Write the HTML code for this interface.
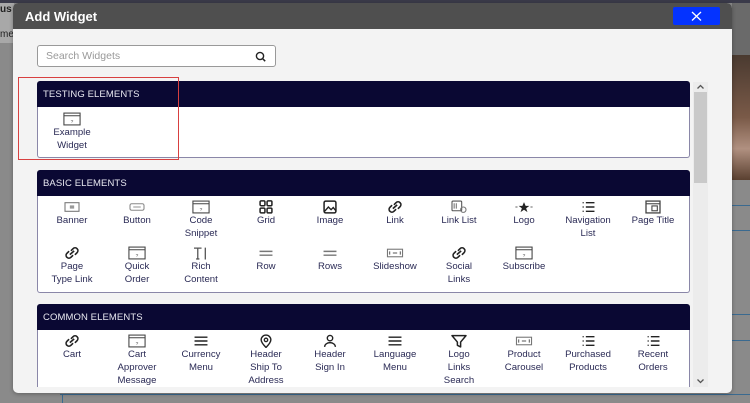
<!DOCTYPE html>
<html><head><meta charset="utf-8"><style>
*{margin:0;padding:0;box-sizing:border-box}
body{width:750px;height:403px;overflow:hidden;position:relative;background:#8a8a8a;font-family:"Liberation Sans",sans-serif}
.a{position:absolute}
.it{position:absolute;width:68px;margin-left:-34px;text-align:center;color:#2a2a55;font-size:9.6px;line-height:13px}
.it svg{display:block;margin:0 auto 0;width:20px;height:14px}
.ph{position:absolute;left:37px;width:653px;height:26px;background:#0a0833;color:#e8e8f0;font-size:9.5px;line-height:27px;padding-left:6px;border-radius:3px 3px 0 0;letter-spacing:.1px}
.pb{position:absolute;left:37px;width:653px;background:#fff;border:1px solid #8a87a8;border-top:none;border-radius:0 0 3px 3px}
</style></head><body>
<div class="a" style="left:0;top:0;width:750px;height:3px;background:#3a3a4a"></div>
<div class="a" style="left:0;top:3px;width:14px;height:40px;background:#a8a8a8"></div>
<div class="a" style="left:0;top:4px;font-size:10px;font-weight:bold;color:#222">us</div>
<div class="a" style="left:0;top:29px;font-size:10px;color:#222">me</div>
<div class="a" style="left:732px;top:3px;width:18px;height:52px;background:#6a6a6a"></div>
<div class="a" style="left:732px;top:55px;width:18px;height:125px;background:linear-gradient(180deg,#4a3a30,#7a5a48 50%,#b09080 75%,#5a4030)"></div>
<div class="a" style="left:732px;top:205px;width:18px;height:1px;background:#3a6a90"></div>
<div class="a" style="left:732px;top:230px;width:18px;height:1px;background:#3a6a90"></div>
<div class="a" style="left:732px;top:314px;width:18px;height:1px;background:#3a6a90"></div>
<div class="a" style="left:732px;top:340px;width:18px;height:1px;background:#3a6a90"></div>
<div class="a" style="left:60px;top:394px;width:690px;height:1px;background:#3a6a90"></div>
<div class="a" style="left:62px;top:394px;width:1px;height:9px;background:#3a6a90"></div>
<div class="a" style="left:13px;top:3px;width:719px;height:390px;background:#f3f3f3;border-radius:5px;overflow:hidden;box-shadow:0 1px 4px rgba(0,0,0,.3)">
 <div style="height:26px;background:#4f4f4f;color:#fff;font-weight:bold;font-size:13px;line-height:27px;padding-left:12px">Add Widget</div>
</div>
<div class="a" style="left:673px;top:7px;width:47px;height:18px;background:#0433ff;border-radius:2px"><svg width="47" height="18"><path d="M19 5l9 8.5M28 5l-9 8.5" stroke="#fff" stroke-width="1.3"/></svg></div>
<div class="a" style="left:37px;top:45px;width:239px;height:22px;background:#fff;border:1px solid #999;border-radius:3px;font-size:10.5px;color:#999;line-height:20px;padding-left:8px">Search Widgets
 <svg class="a" style="left:217px;top:5px" width="12" height="12"><circle cx="5" cy="5" r="3.6" fill="none" stroke="#222" stroke-width="1.4"/><path d="M7.6 7.6l2.6 2.6" stroke="#222" stroke-width="1.5"/></svg></div>
<div class="a" style="left:693px;top:82px;width:15px;height:305px;background:#ececec"></div>
<div class="a" style="left:694px;top:92px;width:13px;height:91px;background:#c9c9c9"></div>
<svg class="a" style="left:695px;top:83px" width="11" height="8"><path d="M2.5 5.5l3-3 3 3" fill="none" stroke="#555" stroke-width="1.3"/></svg>
<svg class="a" style="left:695px;top:377px" width="11" height="8"><path d="M2.5 2.5l3 3 3-3" fill="none" stroke="#555" stroke-width="1.3"/></svg>
<div class="a" style="left:0;top:0;width:750px;height:387px;overflow:hidden">
<div class="ph" style="top:81px">TESTING ELEMENTS</div>
<div class="pb" style="top:107px;height:51px"></div>
<div class="ph" style="top:170px">BASIC ELEMENTS</div>
<div class="pb" style="top:196px;height:97px"></div>
<div class="ph" style="top:304px">COMMON ELEMENTS</div>
<div class="pb" style="top:330px;height:80px"></div>

<div class="it" style="left:72px;top:112px"><svg viewBox="0 0 18 13"><rect x="1.5" y="1" width="15" height="11" fill="none" stroke="#444"/><path d="M1.5 3.5h15" stroke="#444"/><text x="9" y="10" font-size="4.5" text-anchor="middle" fill="#444">?</text></svg>Example<br>Widget</div>

<div class="it" style="left:72px;top:200px"><svg viewBox="0 0 18 13"><rect x="2.5" y="2.5" width="13" height="8" fill="none" stroke="#777"/><rect x="7" y="5" width="4" height="3" fill="#999"/></svg>Banner</div>
<div class="it" style="left:137px;top:200px"><svg viewBox="0 0 18 13"><rect x="2.5" y="3.5" width="13" height="6" rx="1.5" fill="none" stroke="#888"/><path d="M5.5 6.5h7" stroke="#999"/></svg>Button</div>
<div class="it" style="left:201px;top:200px"><svg viewBox="0 0 18 13"><rect x="1.5" y="1" width="15" height="11" fill="none" stroke="#444"/><path d="M1.5 3.5h15" stroke="#444"/><text x="9" y="10" font-size="4.5" text-anchor="middle" fill="#444">?</text></svg>Code<br>Snippet</div>
<div class="it" style="left:266px;top:200px"><svg viewBox="0 0 18 13"><rect x="3.5" y="0.8" width="4.5" height="4.5" rx="1" fill="none" stroke="#222" stroke-width="1.4"/><rect x="10" y="0.8" width="4.5" height="4.5" rx="1" fill="none" stroke="#222" stroke-width="1.4"/><rect x="3.5" y="7.5" width="4.5" height="4.5" rx="1" fill="none" stroke="#222" stroke-width="1.4"/><rect x="10" y="7.5" width="4.5" height="4.5" rx="1" fill="none" stroke="#222" stroke-width="1.4"/></svg>Grid</div>
<div class="it" style="left:330px;top:200px"><svg viewBox="0 0 18 13"><rect x="3.5" y="1" width="11" height="11" rx="1.5" fill="none" stroke="#222" stroke-width="1.4"/><path d="M4 10.5l3.5-4 2.5 2.5 2-2 2.5 3" fill="none" stroke="#222" stroke-width="1.3"/></svg>Image</div>
<div class="it" style="left:395px;top:200px"><svg viewBox="0 0 18 13"><path d="M8 4.5l2-2a2.6 2.6 0 0 1 3.7 3.7l-2 2M10 8.5l-2 2a2.6 2.6 0 0 1-3.7-3.7l2-2M7 8l4-3.5" fill="none" stroke="#222" stroke-width="1.5"/></svg>Link</div>
<div class="it" style="left:459px;top:200px"><svg viewBox="0 0 18 13"><rect x="2.5" y="1" width="9" height="9" rx="1" fill="none" stroke="#555"/><path d="M4.5 3v5M6.5 3v5" stroke="#777"/><circle cx="13" cy="9" r="2.5" fill="none" stroke="#777"/></svg>Link List</div>
<div class="it" style="left:524px;top:200px"><svg viewBox="0 0 18 13"><path d="M9 2l1.5 3.5h3.5l-3 2.2 1.2 3.6L9 9 5.8 11.3 7 7.7 4 5.5h3.5z" fill="#222"/><path d="M1 6.5h2M15 6.5h2" stroke="#666"/></svg>Logo</div>
<div class="it" style="left:588px;top:200px"><svg viewBox="0 0 18 13"><path d="M4 2.5h1M4 6.5h1M4 10.5h1M7 2.5h8M7 6.5h8M7 10.5h8" stroke="#222" stroke-width="1.3"/></svg>Navigation<br>List</div>
<div class="it" style="left:653px;top:200px"><svg viewBox="0 0 18 13"><rect x="2.5" y="1" width="13" height="11" fill="none" stroke="#444" stroke-width="1.2"/><path d="M2.5 3.5h13" stroke="#444"/><rect x="8" y="5.5" width="5" height="4.5" fill="none" stroke="#444"/></svg>Page Title</div>
<div class="it" style="left:72px;top:246px"><svg viewBox="0 0 18 13"><path d="M8 4.5l2-2a2.6 2.6 0 0 1 3.7 3.7l-2 2M10 8.5l-2 2a2.6 2.6 0 0 1-3.7-3.7l2-2M7 8l4-3.5" fill="none" stroke="#222" stroke-width="1.5"/></svg>Page<br>Type Link</div>
<div class="it" style="left:137px;top:246px"><svg viewBox="0 0 18 13"><rect x="1.5" y="1" width="15" height="11" fill="none" stroke="#444"/><path d="M1.5 3.5h15" stroke="#444"/><text x="9" y="10" font-size="4.5" text-anchor="middle" fill="#444">?</text></svg>Quick<br>Order</div>
<div class="it" style="left:201px;top:246px"><svg viewBox="0 0 18 13"><path d="M2.5 2h7M6 2v10M4.5 12h3M13 1.5v11" stroke="#555" stroke-width="1.2" fill="none"/></svg>Rich<br>Content</div>
<div class="it" style="left:266px;top:246px"><svg viewBox="0 0 18 13"><path d="M3 5h12M3 8.5h12" stroke="#777" stroke-width="1.3"/></svg>Row</div>
<div class="it" style="left:330px;top:246px"><svg viewBox="0 0 18 13"><path d="M3 5h12M3 8.5h12" stroke="#777" stroke-width="1.3"/></svg>Rows</div>
<div class="it" style="left:395px;top:246px"><svg viewBox="0 0 18 13"><rect x="2" y="3" width="14" height="7" fill="none" stroke="#777"/><path d="M4 5v3M14 5v3M7 6.5h4" stroke="#777" stroke-width="1.2"/></svg>Slideshow</div>
<div class="it" style="left:459px;top:246px"><svg viewBox="0 0 18 13"><path d="M8 4.5l2-2a2.6 2.6 0 0 1 3.7 3.7l-2 2M10 8.5l-2 2a2.6 2.6 0 0 1-3.7-3.7l2-2M7 8l4-3.5" fill="none" stroke="#222" stroke-width="1.5"/></svg>Social<br>Links</div>
<div class="it" style="left:524px;top:246px"><svg viewBox="0 0 18 13"><rect x="1.5" y="1" width="15" height="11" fill="none" stroke="#444"/><path d="M1.5 3.5h15" stroke="#444"/><text x="9" y="10" font-size="4.5" text-anchor="middle" fill="#444">?</text></svg>Subscribe</div>
<div class="it" style="left:72px;top:334px"><svg viewBox="0 0 18 13"><path d="M8 4.5l2-2a2.6 2.6 0 0 1 3.7 3.7l-2 2M10 8.5l-2 2a2.6 2.6 0 0 1-3.7-3.7l2-2M7 8l4-3.5" fill="none" stroke="#222" stroke-width="1.5"/></svg>Cart</div>
<div class="it" style="left:137px;top:334px"><svg viewBox="0 0 18 13"><rect x="1.5" y="1" width="15" height="11" fill="none" stroke="#444"/><path d="M1.5 3.5h15" stroke="#444"/><text x="9" y="10" font-size="4.5" text-anchor="middle" fill="#444">?</text></svg>Cart<br>Approver<br>Message</div>
<div class="it" style="left:201px;top:334px"><svg viewBox="0 0 18 13"><path d="M3 3h12M3 6.5h12M3 10h12" stroke="#222" stroke-width="1.3"/></svg>Currency<br>Menu</div>
<div class="it" style="left:266px;top:334px"><svg viewBox="0 0 18 13"><path d="M9 12.5C6 9.5 4.5 7.5 4.5 5.5a4.5 4.5 0 0 1 9 0c0 2-1.5 4-4.5 7z" fill="none" stroke="#222" stroke-width="1.3"/><circle cx="9" cy="5.5" r="1.6" fill="none" stroke="#222" stroke-width="1.2"/></svg>Header<br>Ship To<br>Address</div>
<div class="it" style="left:330px;top:334px"><svg viewBox="0 0 18 13"><circle cx="9" cy="3.8" r="2.5" fill="none" stroke="#222" stroke-width="1.3"/><path d="M4 12a5 4 0 0 1 10 0" fill="none" stroke="#222" stroke-width="1.3"/></svg>Header<br>Sign In</div>
<div class="it" style="left:395px;top:334px"><svg viewBox="0 0 18 13"><path d="M3 3h12M3 6.5h12M3 10h12" stroke="#222" stroke-width="1.3"/></svg>Language<br>Menu</div>
<div class="it" style="left:459px;top:334px"><svg viewBox="0 0 18 13"><path d="M2.5 1.5h13l-5 6v4.5l-3-1.5v-3z" fill="none" stroke="#222" stroke-width="1.4" stroke-linejoin="round"/></svg>Logo<br>Links<br>Search</div>
<div class="it" style="left:524px;top:334px"><svg viewBox="0 0 18 13"><rect x="2" y="3" width="14" height="7" fill="none" stroke="#777"/><path d="M4 5v3M14 5v3M7 6.5h4" stroke="#777" stroke-width="1.2"/></svg>Product<br>Carousel</div>
<div class="it" style="left:588px;top:334px"><svg viewBox="0 0 18 13"><path d="M4 2.5h1M4 6.5h1M4 10.5h1M7 2.5h8M7 6.5h8M7 10.5h8" stroke="#222" stroke-width="1.3"/></svg>Purchased<br>Products</div>
<div class="it" style="left:653px;top:334px"><svg viewBox="0 0 18 13"><path d="M4 2.5h1M4 6.5h1M4 10.5h1M7 2.5h8M7 6.5h8M7 10.5h8" stroke="#222" stroke-width="1.3"/></svg>Recent<br>Orders</div>
</div>
<div class="a" style="left:18px;top:77px;width:161px;height:83px;border:1.5px solid #d84040"></div>
</body></html>
